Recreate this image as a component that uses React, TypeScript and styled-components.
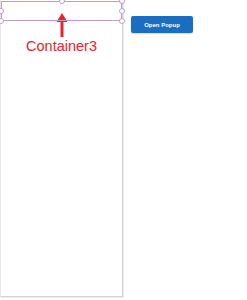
import React from "react";
import styled, { createGlobalStyle } from "styled-components";

const Global = createGlobalStyle`
  html, body { margin: 0; padding: 0; background: #ffffff; }
  body { font-family: "Liberation Sans", Arial, sans-serif; }
`;

const Page = styled.div`
  width: 247px;
  height: 300px;
  display: flex;
  align-items: flex-start;
  gap: 8px;
  background: #fff;
`;

const Panel = styled.div`
  position: relative;
  width: 121px;
  height: 296px;
  border: 1px solid #d4d4d4;
  border-top: none;
  border-left-color: #e6e6e6;
  box-shadow: 1px 1px 1px rgba(0,0,0,0.08);
  flex-shrink: 0;
  display: flex;
  flex-direction: column;
  align-items: center;
`;

const Selection = styled.div`
  position: absolute;
  left: 0;
  top: 1px;
  width: 121px;
  height: 20px;
  border: 1px solid #b9a0cc;
  box-sizing: border-box;
`;

const Handle = styled.span<{ $x: string; $y: string }>`
  position: absolute;
  width: 4px;
  height: 4px;
  border-radius: 50%;
  border: 1px solid #b9a0cc;
  background: #fff;
  left: ${(p) => p.$x};
  top: ${(p) => p.$y};
  transform: translate(-50%, -50%);
`;

const Callout = styled.div`
  margin-top: 13px;
  display: flex;
  flex-direction: column;
  align-items: center;
`;

const Label = styled.div`
  color: #e8232a;
  font-size: 14.5px;
  line-height: 17px;
  margin-top: 1px;
`;

const Side = styled.div`
  padding-top: 16px;
  display: flex;
`;

const Button = styled.button`
  display: block;
  width: 62px;
  height: 17px;
  padding: 0;
  border: none;
  border-radius: 2px;
  background: #1a6dc0;
  color: #fff;
  font-family: "Liberation Sans", Arial, sans-serif;
  font-size: 6px;
  font-weight: bold;
  box-shadow: 0 1px 1px rgba(0,0,0,0.15);
`;

export default function App() {
  return (
    <>
      <Global />
      <Page>
        <Panel>
          <Selection>
            <Handle $x="50%" $y="-1px" />
            <Handle $x="calc(100% + 1px)" $y="-1px" />
            <Handle $x="calc(100% + 1px)" $y="50%" />
            <Handle $x="calc(100% + 1px)" $y="calc(100% + 1px)" />
            <Handle $x="-1px" $y="50%" />
            <Handle $x="-1px" $y="calc(100% + 1px)" />
          </Selection>
          <Callout>
            <svg width="12" height="24" viewBox="0 0 12 24">
              <polygon points="6,0 11.5,9 7.5,9 7.5,24 4.5,24 4.5,9 0.5,9" fill="#e8232a" />
            </svg>
            <Label>Container3</Label>
          </Callout>
        </Panel>
        <Side>
          <Button>Open Popup</Button>
        </Side>
      </Page>
    </>
  );
}
